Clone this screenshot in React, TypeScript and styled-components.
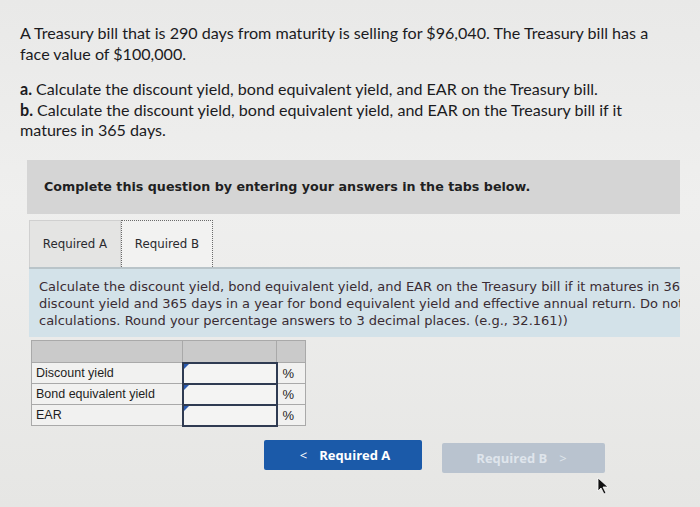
import React from 'react';
import styled, { createGlobalStyle } from 'styled-components';

const GlobalStyle = createGlobalStyle`
  html, body {
    margin: 0;
    padding: 0;
    background: #ebebea;
  }
  body {
    width: 700px;
    height: 507px;
    overflow: hidden;
  }
`;

type Row = { label: string };

const rows: Row[] = [
  { label: 'Discount yield' },
  { label: 'Bond equivalent yield' },
  { label: 'EAR' },
];

const App = () => {
  return (
    <Page>
      <GlobalStyle />
      <Question>
        <p>
          A Treasury bill that is 290 days from maturity is selling for $96,040. The Treasury bill has a
          face value of $100,000.
        </p>
        <Part>
          <b>a.</b> Calculate the discount yield, bond equivalent yield, and EAR on the Treasury bill.
        </Part>
        <Part>
          <b>b.</b> Calculate the discount yield, bond equivalent yield, and EAR on the Treasury bill if it
          matures in 365 days.
        </Part>
      </Question>

      <Banner>Complete this question by entering your answers in the tabs below.</Banner>

      <Tabs>
        <Tab>Required A</Tab>
        <Tab active>Required B</Tab>
      </Tabs>

      <Instructions>
        <Line>Calculate the discount yield, bond equivalent yield, and EAR on the Treasury bill if it matures in 365 days. Use 360 days in a year for</Line>
        <Line>discount yield and 365 days in a year for bond equivalent yield and effective annual return. Do not round intermediate</Line>
        <Line>calculations. Round your percentage answers to 3 decimal places. (e.g., 32.161))</Line>
      </Instructions>

      <AnswerTable>
        <thead>
          <tr>
            <HeadCell style={{ width: 150 }} />
            <HeadCell style={{ width: 93 }} />
            <HeadCell style={{ width: 28 }} />
          </tr>
        </thead>
        <tbody>
          {rows.map((r) => (
            <tr key={r.label}>
              <LabelCell>{r.label}</LabelCell>
              <InputCell>
                <Marker />
              </InputCell>
              <UnitCell>%</UnitCell>
            </tr>
          ))}
        </tbody>
      </AnswerTable>

      <NavRow>
        <NavButton>
          <Chevron>&lt;</Chevron> Required A
        </NavButton>
        <NavButton disabled>
          Required B <Chevron>&gt;</Chevron>
        </NavButton>
        <Cursor viewBox="0 0 12 18" aria-hidden>
          <path d="M1 1 L1 14 L4 11 L7 17 L9 16 L6 10 L11 10 Z" fill="#111" stroke="#fff" strokeWidth="0.8" />
        </Cursor>
      </NavRow>
    </Page>
  );
};

export default App;

const Page = styled.div`
  position: relative;
  width: 700px;
  height: 507px;
  padding-top: 23px;
  box-sizing: border-box;
  background: linear-gradient(180deg, #e9e9e8 0%, #efefee 40%, #e6e6e4 100%);
`;

const Question = styled.div`
  padding: 0 30px 0 20px;
  font-family: Lato, 'Open Sans', sans-serif;
  font-size: 16.1px;
  line-height: 20.5px;
  color: #1b1b1e;

  p {
    margin: 0 0 15px 0;
  }
  b {
    font-weight: 700;
  }
`;

const Part = styled.div`
  margin: 0;
`;

const Banner = styled.div`
  margin: 19px 20px 0 27px;
  height: 54px;
  display: flex;
  align-items: center;
  padding-left: 17px;
  background: #d5d5d5;
  font-family: 'DejaVu Sans', Verdana, sans-serif;
  font-weight: 700;
  font-size: 12.7px;
  color: #1f1f22;
`;

const Tabs = styled.div`
  display: flex;
  margin: 6px 20px 0 29px;
  height: 47px;
`;

const Tab = styled.div<{ active?: boolean }>`
  width: 92px;
  box-sizing: border-box;
  display: flex;
  align-items: center;
  justify-content: center;
  font-family: 'DejaVu Sans', Verdana, sans-serif;
  font-size: 11.8px;
  color: #2a2a2e;
  background: ${(p) => (p.active ? '#f2f2f1' : '#e4e4e3')};
  border: ${(p) => (p.active ? '1px dotted #6a6a6a' : '1px solid #d0d0d0')};
  border-bottom: none;
`;

const Instructions = styled.div`
  margin: 0 20px 0 29px;
  height: 70px;
  box-sizing: border-box;
  padding: 9px 0 0 10px;
  border-top: 2px solid #b9c4c9;
  background: #d3e2e9;
  font-family: 'DejaVu Sans', Verdana, sans-serif;
  font-size: 13px;
  line-height: 17px;
  color: #3a2c33;
  overflow: hidden;
`;

const Line = styled.div`
  white-space: nowrap;
`;

const AnswerTable = styled.table`
  margin: 3px 0 0 31px;
  border-collapse: collapse;
  font-family: 'Liberation Sans', Arial, sans-serif;
  font-size: 12.5px;
  color: #1e1e22;
`;

const HeadCell = styled.th`
  height: 21px;
  padding: 0;
  background: #cacaca;
  border: 1px solid #a9a9a9;
`;

const LabelCell = styled.td`
  height: 20px;
  padding: 0 0 0 4px;
  border: 1px solid #a9a9a9;
  background: #f1f1f0;
`;

const InputCell = styled.td`
  position: relative;
  padding: 0;
  border: 2px solid #2f3b52;
  background: #f4f4f3;
`;

const Marker = styled.span`
  position: absolute;
  left: 0;
  top: 0;
  width: 0;
  height: 0;
  border-top: 5px solid #2b5bb0;
  border-right: 5px solid transparent;
`;

const UnitCell = styled.td`
  padding: 0 0 0 5px;
  border: 1px solid #a9a9a9;
  background: #f1f1f0;
  font-size: 13px;
`;

const NavRow = styled.div`
  position: relative;
  display: flex;
  align-items: flex-start;
  gap: 20px;
  margin: 13px 0 0 264px;
`;

const NavButton = styled.div<{ disabled?: boolean }>`
  width: ${(p) => (p.disabled ? '163px' : '158px')};
  height: 30px;
  margin-top: ${(p) => (p.disabled ? '3px' : '0')};
  display: flex;
  align-items: center;
  justify-content: center;
  gap: 8px;
  border-radius: 2px;
  background: ${(p) => (p.disabled ? '#b9c3cf' : '#1b5aa9')};
  color: ${(p) => (p.disabled ? '#dfe5ec' : '#ffffff')};
  font-family: 'Open Sans', 'Noto Sans', sans-serif;
  font-weight: 700;
  font-size: 13px;
`;

const Chevron = styled.span`
  font-weight: 400;
  font-size: 13px;
  margin: 0 4px;
`;

const Cursor = styled.svg`
  position: absolute;
  left: 333px;
  top: 37px;
  width: 12px;
  height: 18px;
`;
